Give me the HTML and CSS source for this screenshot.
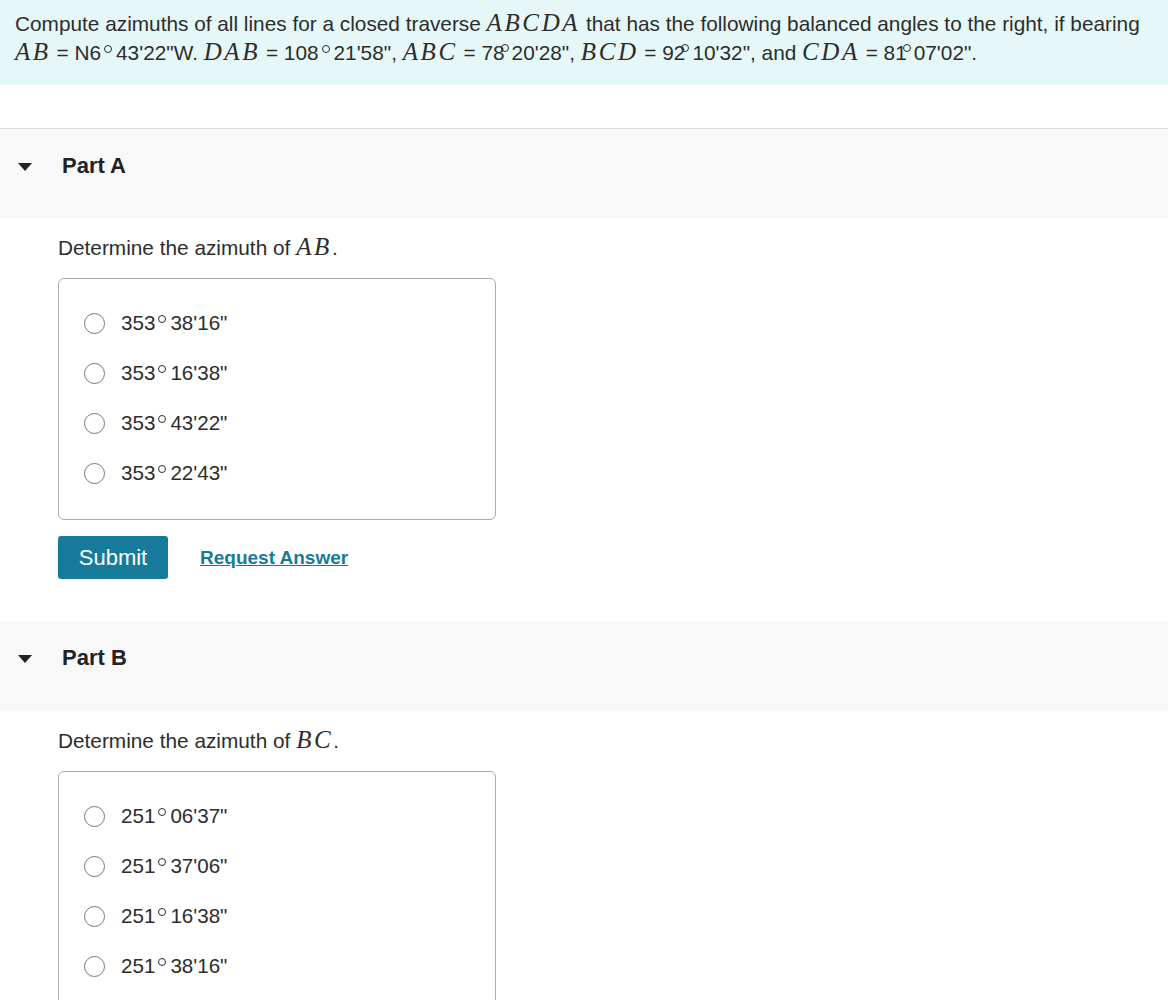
FILE: index.html
```html
<!DOCTYPE html>
<html lang="en">
  <head>
    <meta charset="UTF-8" />
    <meta name="viewport" content="width=device-width, initial-scale=1.0" />
    <title>Traverse azimuths</title>
    <link rel="stylesheet" href="styles.css">
  </head>
  <body>
    <section class="problem">
      <p>
        Compute azimuths of all lines for a closed traverse <span class="math">ABCDA</span> that has the following balanced angles to the right, if bearing
        <span class="math">AB</span> = N6<span class="deg"></span>43'22"W. <span class="math">DAB</span> = 108<span class="deg"></span>21'58", <span class="math">ABC</span> = 78<span class="deg tight"></span>20'28", <span class="math">BCD</span> = 92<span class="deg tight"></span>10'32", and <span class="math">CDA</span> = 81<span class="deg tight"></span>07'02".
      </p>
    </section>

    <div class="parts">
      <section class="part first">
        <div class="part-header">
          <span class="caret"></span>
          <h2>Part A</h2>
        </div>
        <div class="part-body">
          <p class="prompt">Determine the azimuth of <span class="math">AB</span>.</p>
          <div class="choices">
            <label class="choice"><span class="radio"></span><span>353<span class="deg"></span>38'16"</span></label>
            <label class="choice"><span class="radio"></span><span>353<span class="deg"></span>16'38"</span></label>
            <label class="choice"><span class="radio"></span><span>353<span class="deg"></span>43'22"</span></label>
            <label class="choice"><span class="radio"></span><span>353<span class="deg"></span>22'43"</span></label>
          </div>
          <div class="actions">
            <button class="submit">Submit</button>
            <a href="#" class="request">Request Answer</a>
          </div>
        </div>
      </section>

      <section class="part">
        <div class="part-header">
          <span class="caret"></span>
          <h2>Part B</h2>
        </div>
        <div class="part-body">
          <p class="prompt">Determine the azimuth of <span class="math">BC</span>.</p>
          <div class="choices">
            <label class="choice"><span class="radio"></span><span>251<span class="deg"></span>06'37"</span></label>
            <label class="choice"><span class="radio"></span><span>251<span class="deg"></span>37'06"</span></label>
            <label class="choice"><span class="radio"></span><span>251<span class="deg"></span>16'38"</span></label>
            <label class="choice"><span class="radio"></span><span>251<span class="deg"></span>38'16"</span></label>
          </div>
        </div>
      </section>
    </div>
  </body>
</html>
```

FILE: styles.css
```css
* {
  margin: 0;
  padding: 0;
  box-sizing: border-box;
}
body {
  font-family: "Liberation Sans", Arial, sans-serif;
  font-size: 20.8px;
  color: #2d2d2d;
  background: #fff;
}
.math {
  font-family: "Liberation Serif", "Times New Roman", serif;
  font-style: italic;
  font-size: 25px;
  line-height: 20px;
  letter-spacing: 2.6px;
}
/* degree circle, like \circ in the math */
.deg {
  display: inline-block;
  width: 8px;
  height: 8px;
  border: 1.2px solid currentColor;
  border-radius: 50%;
  margin: 0 4px 0 3px;
  vertical-align: 7px;
}
.deg.tight {
  margin-left: -4px;
  margin-right: 3px;
  vertical-align: 8px;
}
/* problem statement */
.problem {
  background-color: #e6f7f8;
  padding: 9px 15px 18px;
  line-height: 29px;
}
.parts {
  margin-top: 43px;
}
.part.first .part-header {
  border-top: 1px solid #dedede;
}
.part-header {
  display: flex;
  align-items: flex-start;
  height: 90px;
  padding-top: 24px;
  background-color: #f8f8f8;
}
.caret {
  width: 0;
  height: 0;
  margin: 10px 0 0 18px;
  border-left: 7px solid transparent;
  border-right: 7px solid transparent;
  border-top: 8px solid #222;
}
.part-header h2 {
  margin-left: 30px;
  font-size: 22px;
  line-height: 26px;
  font-weight: bold;
  color: #222;
}
.part-body {
  padding: 18px 0 42px 58px;
}
.prompt {
  line-height: 24px;
  margin-bottom: 18px;
}
.choices {
  width: 438px;
  border: 1px solid #aaa;
  border-radius: 6px;
  padding: 19px 0 21px 25px;
}
.choice {
  display: flex;
  align-items: center;
  height: 50px;
  font-size: 20.6px;
  cursor: pointer;
}
.radio {
  width: 21px;
  height: 21px;
  border: 1.5px solid #777;
  border-radius: 50%;
  margin-right: 16px;
  flex-shrink: 0;
}
.actions {
  display: flex;
  align-items: center;
  margin-top: 16px;
}
.submit {
  width: 110px;
  height: 43px;
  background-color: #167b9b;
  color: #fff;
  border: none;
  border-radius: 3px;
  font-family: inherit;
  font-size: 22px;
  cursor: pointer;
}
.request {
  margin-left: 32px;
  color: #167b9b;
  font-weight: bold;
  font-size: 19px;
  text-decoration: underline;
}
```
